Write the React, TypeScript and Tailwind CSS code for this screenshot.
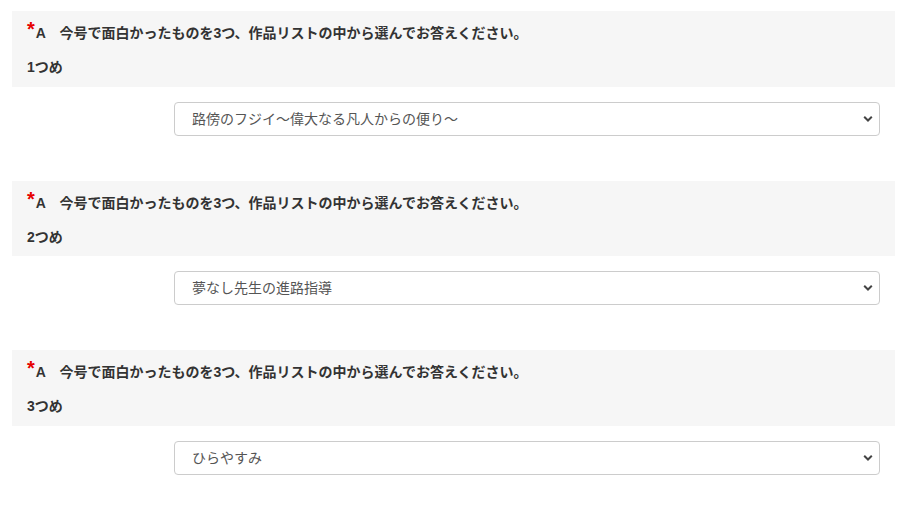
import React from "react";

const items = [
  { n: "1", v: "路傍のフジイ〜偉大なる凡人からの便り〜", h: "h-[76px]", mt: "" },
  { n: "2", v: "夢なし先生の進路指導", h: "h-[75px]", mt: "mt-[45px]" },
  { n: "3", v: "ひらやすみ", h: "h-[76px]", mt: "mt-[45px]" },
];

const FONT = '"Liberation Sans", "Noto Sans CJK JP", sans-serif';

function Chevron() {
  return (
    <svg width="10" height="7" viewBox="0 0 10 7" className="absolute right-[7px] top-1/2 -translate-y-1/2 pointer-events-none">
      <path d="M1.2 1.3 L5 5 L8.8 1.3" fill="none" stroke="#444" strokeWidth="2" />
    </svg>
  );
}

export default function App() {
  return (
    <div
      className="bg-white w-[913px] h-[506px] pl-[12px] pr-[18px] pt-[11px] text-[#333]"
      style={{ fontFamily: FONT }}
    >
      {items.map((it, i) => (
        <div key={i} className={it.mt}>
          <div className={`bg-[#f6f6f6] ${it.h} pl-[15px] pt-[12px]`}>
            <div className="h-[20px] leading-[20px] text-[14px] font-bold flex items-center">
              <span className="text-[#e60000] text-[20px] leading-none relative -top-[4px] mr-[1px]">*</span>
              <span>A　今号で面白かったものを3つ、作品リストの中から選んでお答えください。</span>
            </div>
            <div className="mt-[14px] h-[20px] leading-[20px] text-[14px] font-bold">{it.n}つめ</div>
          </div>
          <div className="mt-[15px] pl-[162px] pr-[15px]">
            <div className="relative">
              <select
                defaultValue={it.v}
                className="appearance-none w-full h-[34px] border border-[#cccccc] rounded-[4px] bg-white pl-[17px] text-[14px] text-[#555] outline-none"
                style={{ fontFamily: FONT }}
              >
                <option value={it.v}>{it.v}</option>
              </select>
              <Chevron />
            </div>
          </div>
        </div>
      ))}
    </div>
  );
}
